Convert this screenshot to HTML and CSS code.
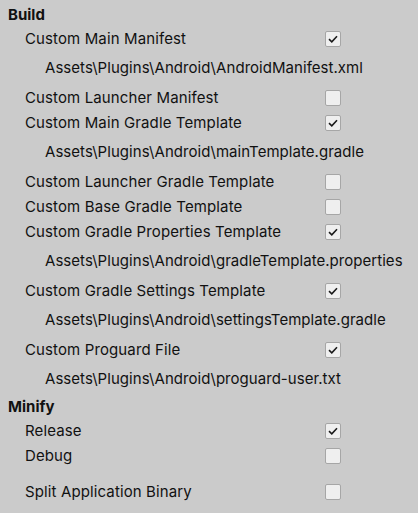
FILE: index.html
```html
<!DOCTYPE html>
<html lang="en">

<head>
    <meta charset="UTF-8">
    <meta name="viewport" content="width=device-width, initial-scale=1.0">
    <title>Publishing Settings</title>
    <link rel="stylesheet" href="styles.css">
</head>

<body>
    <!-- Build -->
    <section class="group">
        <h2 class="group-title">Build</h2>
        <div class="row">
            <span class="label">Custom Main Manifest</span>
            <span class="toggle on"><svg viewBox="0 0 10 8"><path d="M1 4.2 L3.8 6.8 L9 1.2"/></svg></span>
        </div>
        <div class="path">Assets\Plugins\Android\AndroidManifest.xml</div>
        <div class="row">
            <span class="label">Custom Launcher Manifest</span>
            <span class="toggle"></span>
        </div>
        <div class="row">
            <span class="label">Custom Main Gradle Template</span>
            <span class="toggle on"><svg viewBox="0 0 10 8"><path d="M1 4.2 L3.8 6.8 L9 1.2"/></svg></span>
        </div>
        <div class="path">Assets\Plugins\Android\mainTemplate.gradle</div>
        <div class="row">
            <span class="label">Custom Launcher Gradle Template</span>
            <span class="toggle"></span>
        </div>
        <div class="row">
            <span class="label">Custom Base Gradle Template</span>
            <span class="toggle"></span>
        </div>
        <div class="row">
            <span class="label">Custom Gradle Properties Template</span>
            <span class="toggle on"><svg viewBox="0 0 10 8"><path d="M1 4.2 L3.8 6.8 L9 1.2"/></svg></span>
        </div>
        <div class="path">Assets\Plugins\Android\gradleTemplate.properties</div>
        <div class="row">
            <span class="label">Custom Gradle Settings Template</span>
            <span class="toggle on"><svg viewBox="0 0 10 8"><path d="M1 4.2 L3.8 6.8 L9 1.2"/></svg></span>
        </div>
        <div class="path">Assets\Plugins\Android\settingsTemplate.gradle</div>
        <div class="row">
            <span class="label">Custom Proguard File</span>
            <span class="toggle on"><svg viewBox="0 0 10 8"><path d="M1 4.2 L3.8 6.8 L9 1.2"/></svg></span>
        </div>
        <div class="path">Assets\Plugins\Android\proguard-user.txt</div>
    </section>

    <!-- Minify -->
    <section class="group">
        <h2 class="group-title">Minify</h2>
        <div class="row">
            <span class="label">Release</span>
            <span class="toggle on"><svg viewBox="0 0 10 8"><path d="M1 4.2 L3.8 6.8 L9 1.2"/></svg></span>
        </div>
        <div class="row">
            <span class="label">Debug</span>
            <span class="toggle"></span>
        </div>
        <div class="row spaced">
            <span class="label">Split Application Binary</span>
            <span class="toggle"></span>
        </div>
    </section>
</body>

</html>
```

FILE: styles.css
```css
/* Inspector look */
body {
    font-family: Inter, "Noto Sans", sans-serif;
    font-size: 15px;
    color: #111111;
    background-color: #cbcbcb;
    margin: 0;
    padding: 4px 0 0 0;
}

.group-title {
    font-size: 15px;
    font-weight: 700;
    margin: 0;
    padding-left: 8px;
    height: 22px;
    line-height: 22px;
}

.row {
    display: flex;
    align-items: center;
    height: 25px;
    padding-left: 25px;
    padding-right: 77px;
}

.row.spaced {
    margin-top: 11px;
}

.label {
    flex: 1;
    white-space: nowrap;
    letter-spacing: 0.12px;
}

.path {
    height: 34px;
    line-height: 34px;
    padding-left: 45px;
    white-space: nowrap;
    letter-spacing: 0.04px;
}

.toggle {
    width: 14px;
    height: 14px;
    border: 1px solid #a6a6a6;
    border-radius: 2px;
    background-color: #efefef;
    display: flex;
    align-items: center;
    justify-content: center;
}

.toggle svg {
    width: 10px;
    height: 8px;
    fill: none;
    stroke: #1a1a1a;
    stroke-width: 1.6;
}
```
